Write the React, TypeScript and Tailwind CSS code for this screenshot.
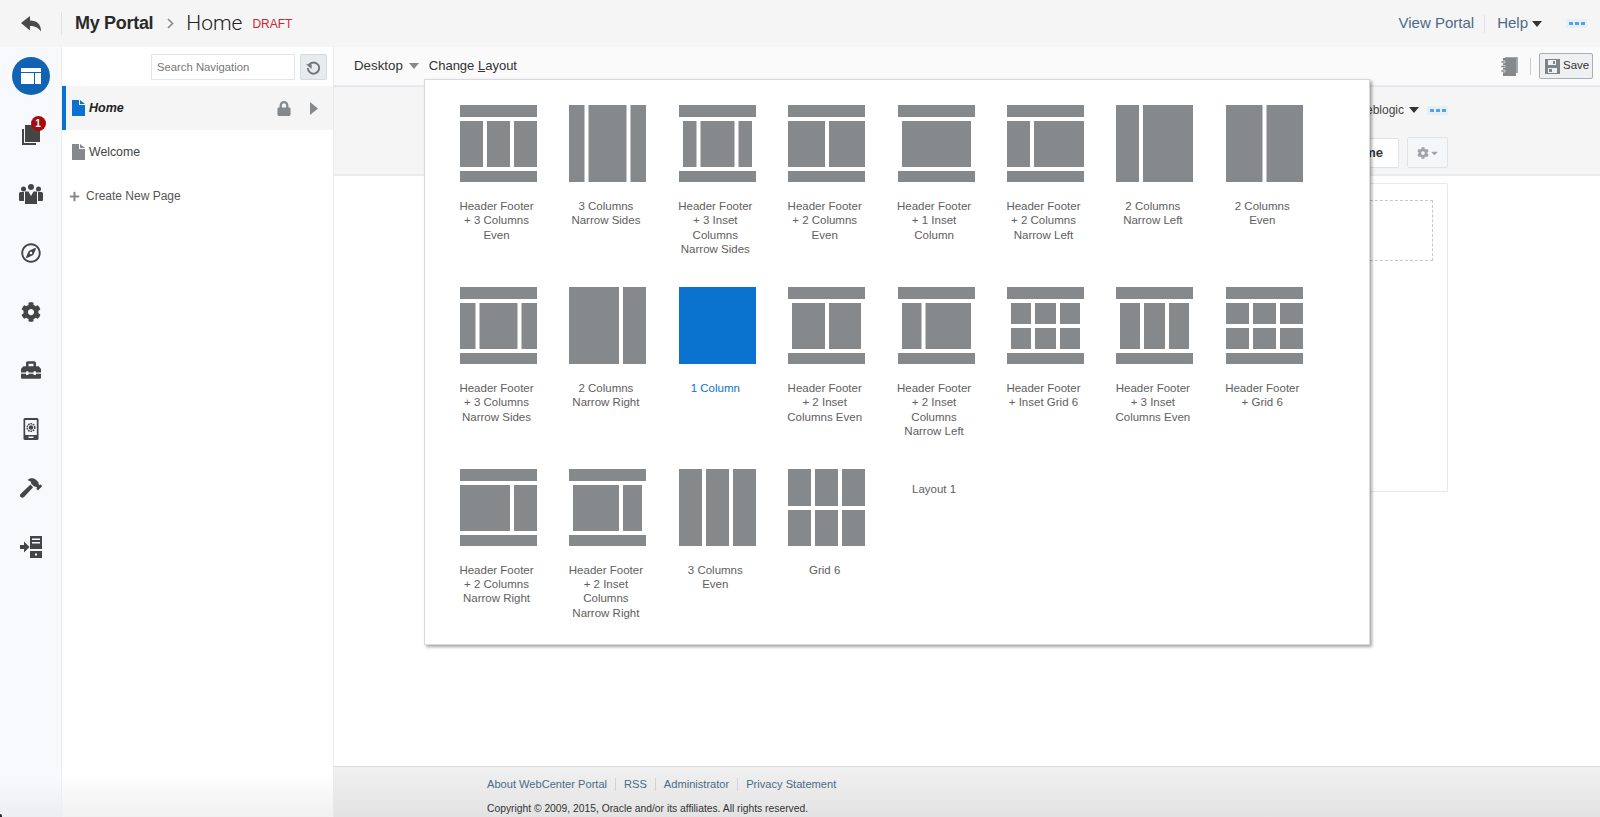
import React from "react";
import { FaLock, FaRegCompass, FaCog, FaToolbox, FaHammer, FaPlus, FaCaretDown } from "react-icons/fa";

type R = [number, number, number, number];
const H: R[] = [[0, 0, 77, 12], [0, 66, 77, 11]];
const mid = (...xs: [number, number][]): R[] => xs.map(([a, b]) => [a, 16, b - a, 46] as R);
const full = (...xs: [number, number][]): R[] => xs.map(([a, b]) => [a, 0, b - a, 77] as R);
const grid = (xs: [number, number][], ys: [number, number][]): R[] =>
  ys.flatMap(([c, d]) => xs.map(([a, b]) => [a, c, b - a, d - c] as R));

type Item = { label: string; rects?: R[]; active?: boolean };
const items: Item[] = [
  { label: "Header Footer\n+ 3 Columns\nEven", rects: [...H, ...mid([0, 23], [27, 50], [54, 77])] },
  { label: "3 Columns\nNarrow Sides", rects: full([0, 15.5], [19.5, 57.5], [61.5, 77]) },
  { label: "Header Footer\n+ 3 Inset\nColumns\nNarrow Sides", rects: [...H, ...mid([4, 17.5], [21.5, 55.5], [59.5, 73])] },
  { label: "Header Footer\n+ 2 Columns\nEven", rects: [...H, ...mid([0, 37], [41, 77])] },
  { label: "Header Footer\n+ 1 Inset\nColumn", rects: [...H, ...mid([4, 73])] },
  { label: "Header Footer\n+ 2 Columns\nNarrow Left", rects: [...H, ...mid([0, 23], [27, 77])] },
  { label: "2 Columns\nNarrow Left", rects: full([0, 23], [27, 77]) },
  { label: "2 Columns\nEven", rects: full([0, 36.5], [40.5, 77]) },

  { label: "Header Footer\n+ 3 Columns\nNarrow Sides", rects: [...H, ...mid([0, 15.5], [19.5, 57.5], [61.5, 77])] },
  { label: "2 Columns\nNarrow Right", rects: full([0, 50], [54, 77]) },
  { label: "1 Column", rects: full([0, 77]), active: true },
  { label: "Header Footer\n+ 2 Inset\nColumns Even", rects: [...H, ...mid([4, 37], [41, 73])] },
  { label: "Header Footer\n+ 2 Inset\nColumns\nNarrow Left", rects: [...H, ...mid([4, 23.5], [27.5, 73])] },
  { label: "Header Footer\n+ Inset Grid 6", rects: [...H, ...grid([[4, 24], [28, 49], [53, 73]], [[16, 37], [41, 62]])] },
  { label: "Header Footer\n+ 3 Inset\nColumns Even", rects: [...H, ...mid([4, 24], [28, 49], [53, 73])] },
  { label: "Header Footer\n+ Grid 6", rects: [...H, ...grid([[0, 23], [27, 50], [54, 77]], [[16, 37], [41, 62]])] },

  { label: "Header Footer\n+ 2 Columns\nNarrow Right", rects: [...H, ...mid([0, 50], [54, 77])] },
  { label: "Header Footer\n+ 2 Inset\nColumns\nNarrow Right", rects: [...H, ...mid([4, 50], [54, 73])] },
  { label: "3 Columns\nEven", rects: full([0, 23], [27, 50], [54, 77]) },
  { label: "Grid 6", rects: grid([[0, 23], [27, 50], [54, 77]], [[0, 37], [41, 77]]) },
  { label: "Layout 1" },
];

function Thumb({ rects, active }: { rects: R[]; active?: boolean }) {
  return (
    <svg width="77" height="77" viewBox="0 0 77 77" className="ml-[18px] block">
      {rects.map(([x, y, w, h], i) => (
        <rect key={i} x={x} y={y} width={w} height={h} fill={active ? "#0a72cf" : "#85898c"} />
      ))}
    </svg>
  );
}

function Dots() {
  return (
    <span className="flex h-[9px] w-[21px] items-center justify-center gap-[2px] bg-[#e6eef6]">
      <i className="block h-[3px] w-[4px] bg-[#4da3f0]" />
      <i className="block h-[3px] w-[4px] bg-[#4da3f0]" />
      <i className="block h-[3px] w-[4px] bg-[#4da3f0]" />
    </span>
  );
}

const Tri = ({ c = "border-t-[#85898c]" }: { c?: string }) => (
  <span className={`inline-block h-0 w-0 border-x-[5px] border-t-[6px] border-x-transparent ${c}`} />
);

const DocIcon = ({ color }: { color: string }) => (
  <svg width="13" height="16" viewBox="0 0 13 16">
    <path d="M0 0h7v5h6v11H0z" fill={color} />
    <path d="M8 0l5 4H8z" fill={color} />
  </svg>
);

function SideIcon({ children }: { children: React.ReactNode }) {
  return <div className="flex h-[58.8px] items-center justify-center text-[#454545]">{children}</div>;
}

export default function App() {
  return (
    <div className="relative flex h-screen w-screen flex-col overflow-hidden bg-white font-['Liberation_Sans',Arial,sans-serif] text-[#333]">
      {/* Top bar */}
      <header className="flex h-[47px] shrink-0 items-center bg-[#f5f5f5] pl-[21px] pr-[13px]">
        <svg width="20" height="16" viewBox="0 0 20 16">
          <path d="M0 7L9 0v4.500C16 4.500 20 8 20 15.500 17 11.500 14 10 9 10v4.500z" fill="#4a4a4a" />
        </svg>
        <span className="ml-[20px] h-[23px] w-px bg-[#e0e2e4]" />
        <span className="ml-[13px] text-[18px] font-bold tracking-[-0.3px] text-[#2a2a2a]">My Portal</span>
        <svg width="7" height="11" viewBox="0 0 7 11" className="ml-[14px]">
          <path d="M1 1l4.500 4.500L1 10" fill="none" stroke="#85898c" strokeWidth="1.6" />
        </svg>
        <span className="ml-[12px] font-['Roboto',sans-serif] text-[21px] font-light text-[#222]">Home</span>
        <span className="ml-[10px] text-[12px] text-[#d0262e]">DRAFT</span>
        <div className="ml-auto flex items-center">
          <span className="text-[15px] text-[#4a6b87]">View Portal</span>
          <span className="ml-[10px] h-[18px] w-px bg-[#dfe2e5]" />
          <span className="ml-[12px] text-[15px] text-[#4a6b87]">Help</span>
          <Tri c="ml-[4px] border-t-[#333]" />
          <span className="ml-[24px]"><Dots /></span>
        </div>
      </header>

      <div className="flex min-h-0 flex-1">
        {/* Icon rail */}
        <aside className="flex w-[62px] shrink-0 flex-col border-r border-[#e8eef2] bg-[linear-gradient(#f7f9fd_95%,#eceef0)]">
          <SideIcon>
            <span className="flex h-[38px] w-[38px] items-center justify-center rounded-full bg-[#1164b4]">
              <svg width="20" height="16" viewBox="0 0 20 16">
                <path d="M0 0h20v4H0zM0 5h13v11H0zM14 5h6v11h-6z" fill="#fff" />
              </svg>
            </span>
          </SideIcon>
          <SideIcon>
            <span className="relative block h-[20px] w-[18px]">
              <svg width="18" height="20" viewBox="0 0 18 20">
                <path d="M0 4h2v14h12v2H0z" fill="#454545" />
                <path d="M3 0h15v17H3z" fill="#454545" />
              </svg>
              <span className="absolute left-[9px] top-[-9px] flex h-[15px] w-[15px] items-center justify-center rounded-full bg-[#a80a0a] text-[10px] font-bold text-white">1</span>
            </span>
          </SideIcon>
          <SideIcon>
            <svg width="24" height="20" viewBox="0 0 24 20" fill="#454545">
              <circle cx="12" cy="3" r="3" />
              <circle cx="4.500" cy="5" r="2.500" />
              <circle cx="19.500" cy="5" r="2.500" />
              <path d="M0 9.500q0-1.500 1.500-1.500h3.500v9H1q-1 0-1-1zM24 9.500q0-1.500-1.500-1.500H19v9h4q1 0 1-1z" />
              <path d="M6 7.500h3.500L12 12l2.500-4.500H18V20H6z" />
            </svg>
          </SideIcon>
          <SideIcon><FaRegCompass className="h-[20px] w-[20px]" /></SideIcon>
          <SideIcon><FaCog className="h-[20px] w-[20px]" /></SideIcon>
          <SideIcon><FaToolbox className="h-[20px] w-[22px]" /></SideIcon>
          <SideIcon>
            <svg width="16" height="22" viewBox="0 0 16 22">
              <rect x="0.5" width="15" height="22" rx="1.5" fill="#454545" />
              <rect x="2.2" y="2" width="11.6" height="15" fill="#f7f9fd" />
              <circle cx="8" cy="9.500" r="3.800" fill="none" stroke="#454545" strokeWidth="1.500" strokeDasharray="1.600 0.800" />
              <circle cx="8" cy="9.500" r="2.200" fill="#454545" />
              <rect x="5.500" y="18.500" width="5" height="1.500" fill="#f7f9fd" />
            </svg>
          </SideIcon>
          <SideIcon><FaHammer className="h-[20px] w-[22px]" /></SideIcon>
          <SideIcon>
            <svg width="22" height="22" viewBox="0 0 22 22">
              <path d="M0 9h4V5.500L9.500 11 4 16.500V13H0z" fill="#454545" />
              <path d="M10 0h12v13H10zM10 15h12v7H10z" fill="#454545" />
              <path d="M12 2.500h8v1.500h-8zM12 6h8v1.500h-8zM15 17.500h2v2h-2z" fill="#f7f9fd" />
            </svg>
          </SideIcon>
        </aside>

        {/* Page navigator */}
        <nav className="flex w-[272px] shrink-0 flex-col border-r border-[#e6eaee] bg-[linear-gradient(#fff_94%,#f1f1f1)]">
          <div className="flex h-[39px] items-start justify-end gap-[5px] pr-[6px] pt-[7px]">
            <div className="flex h-[26px] w-[144px] items-center border border-[#e2e6ea] bg-white pl-[5px] text-[11.3px] text-[#777]">Search Navigation</div>
            <div className="flex h-[26px] w-[27px] items-center justify-center rounded-[2px] border border-[#d5dade] bg-[#e8ebee]">
              <svg width="15" height="15" viewBox="0 0 16 16" fill="none">
                <path d="M3.200 5A6 6 0 1 1 2 8.500" stroke="#70757a" strokeWidth="2" />
                <path d="M0 4.500h6v5z" fill="#70757a" />
              </svg>
            </div>
          </div>
          <div className="flex h-[44px] items-center border-l-4 border-[#0a72cf] bg-[#f5f5f5] pl-[6px]">
            <DocIcon color="#0a72cf" />
            <span className="ml-[4px] text-[12.5px] font-bold italic text-[#222]">Home</span>
            <FaLock className="ml-auto h-[15px] w-[14px] text-[#85898c]" />
            <svg width="8" height="13" viewBox="0 0 8 13" className="ml-[19px] mr-[15px]"><path d="M0 0l8 6.500-8 6.500z" fill="#85898c" /></svg>
          </div>
          <div className="flex h-[44px] items-center pl-[10px]">
            <DocIcon color="#85898c" />
            <span className="ml-[4px] text-[12.3px] text-[#444]">Welcome</span>
          </div>
          <div className="flex h-[44px] items-center pl-[7px]">
            <FaPlus className="h-[11px] w-[11px] text-[#85898c]" />
            <span className="ml-[6px] text-[12px] text-[#555]">Create New Page</span>
          </div>
        </nav>

        {/* Main */}
        <main className="flex min-w-0 flex-1 flex-col">
          <div className="flex h-[40px] shrink-0 items-center border-b-2 border-[#e6eaee] bg-[#fafafa] pl-[20px] pr-[7px]">
            <span className="text-[13.3px] text-[#333]">Desktop</span>
            <Tri c="ml-[6px] border-t-[#85898c]" />
            <span className="ml-[10px] text-[13px] text-[#333]">Change <u>L</u>ayout</span>
            <svg width="20" height="20" viewBox="0 0 20 20" className="ml-auto">
              <path d="M5 1h13v16H5z" fill="#a5a8ab" />
              <path d="M3 2h13v18H3z" fill="#85898c" />
              <path d="M1 5h4v2H1zM1 9.500h4v2H1zM1 14h4v2H1z" fill="#85898c" stroke="#fafafa" strokeWidth="0.500" />
            </svg>
            <span className="ml-[10px] h-[17px] w-px bg-[#c9cdd0]" />
            <div className="ml-[8px] flex h-[26px] w-[54px] items-center rounded-[2px] border border-[#a9afb4] bg-[#eef0f2] pl-[5px]">
              <svg width="15" height="15" viewBox="0 0 15 15">
                <path d="M0 0h15v15H0z" fill="#7f8387" />
                <path d="M3 1h8v5H3zM3 9h9v5H3z" fill="#eef0f2" />
                <path d="M8 2h2v3H8zM4 10h3v3H4z" fill="#7f8387" />
              </svg>
              <span className="ml-[3px] text-[11.5px] text-[#333]">Save</span>
            </div>
          </div>

          <div className="flex h-[89px] shrink-0 flex-col items-end border-b-2 border-[#e9ecef] bg-[#f5f5f5] pr-[152px]">
            <div className="mt-[14px] flex items-center">
              <span className="text-[12px] text-[#444]">weblogic</span>
              <Tri c="ml-[5px] border-t-[#333]" />
              <span className="ml-[8px]"><Dots /></span>
            </div>
            <div className="mt-[18px] flex items-center gap-[8px]">
              <div className="flex h-[30px] w-[80px] items-center justify-end rounded-[2px] border border-[#dde2e6] bg-white pr-[15px] text-[13px] font-bold text-[#333]">Home</div>
              <div className="flex h-[31px] w-[41px] items-center justify-center gap-[1px] rounded-[2px] border border-[#e0e4e8] bg-[#f5f6f7]">
                <FaCog className="h-[12px] w-[12px] text-[#a0a4a8]" />
                <FaCaretDown className="h-[10px] w-[9px] text-[#a0a4a8]" />
              </div>
            </div>
          </div>

          <div className="min-h-0 flex-1 bg-white pl-[96px] pt-[7px]">
            <div className="flex h-[309px] w-[1018px] justify-end rounded-[2px] border border-[#e4e9ed] pr-[14px] pt-[16px]">
              <div className="h-[61px] w-[600px] border border-dashed border-[#c5c8cb]" />
            </div>
          </div>

          <footer className="h-[51px] shrink-0 border-t border-[#d8dadc] bg-[linear-gradient(#f0f0f0,#e3e3e3)] pl-[153px] text-[#333]">
            <div className="mt-[10px] flex h-[14px] items-center text-[11.1px] text-[#4a6b87]">
              <span>About WebCenter Portal</span>
              <span className="mx-[8px] h-[13px] w-px bg-[#d2d5d8]" />
              <span>RSS</span>
              <span className="mx-[8px] h-[13px] w-px bg-[#d2d5d8]" />
              <span>Administrator</span>
              <span className="mx-[8px] h-[13px] w-px bg-[#d2d5d8]" />
              <span>Privacy Statement</span>
            </div>
            <div className="mt-[12px] text-[10.3px] leading-[12px] text-[#333]">Copyright © 2009, 2015, Oracle and/or its affiliates. All rights reserved.</div>
          </footer>
        </main>
      </div>

      {/* Change Layout popup */}
      <div className="absolute left-[424px] top-[79px] h-[566px] w-[946px] border border-[#d6dade] bg-white pl-[17px] pt-[25px] shadow-[2px_2px_3px_rgba(0,0,0,0.35)]">
        <div className="grid grid-cols-[repeat(8,109.4px)] auto-rows-[181.75px]">
          {items.map((it) => (
            <div key={it.label}>
              {it.rects && <Thumb rects={it.rects} active={it.active} />}
              <div
                className={`w-[109px] whitespace-pre-line text-center text-[11.5px] leading-[14.4px] ${it.rects ? "mt-[17px]" : "mt-[13px]"} ${it.active ? "text-[#0a72cf]" : "text-[#606060]"}`}
              >
                {it.label}
              </div>
            </div>
          ))}
        </div>
      </div>

      {/* Window corner */}
      <span className="absolute bottom-0 left-0 h-[3px] w-[2px] rounded-tr-[2px] bg-[#222]" />
    </div>
  );
}
